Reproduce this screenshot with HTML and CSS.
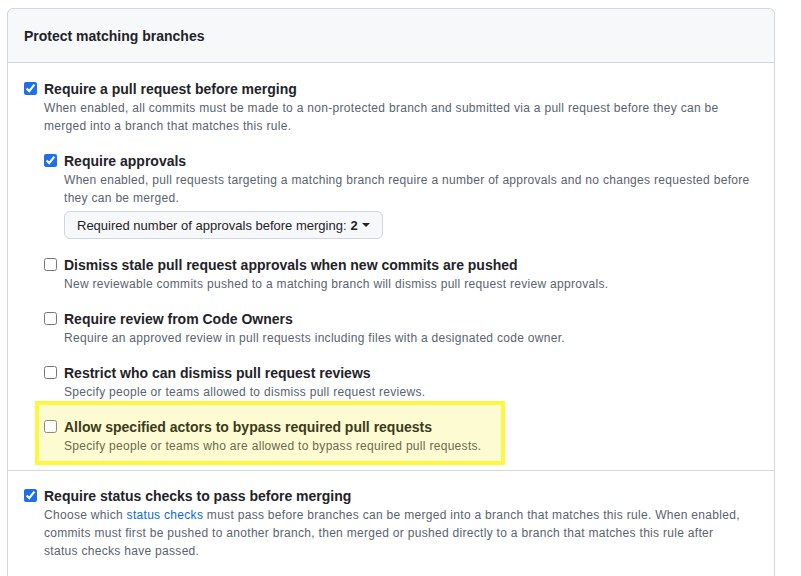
FILE: index.html
```html
<!DOCTYPE html>
<html>
<head>
<meta charset="utf-8">
<link rel="stylesheet" href="styles.css">
</head>
<body>
<div class="box">
  <div class="box-header">Protect matching branches</div>
  <div class="section">
    <div class="option">
      <input type="checkbox" class="cb" checked>
      <div class="option-body">
        <div class="title">Require a pull request before merging</div>
        <p class="desc">When enabled, all commits must be made to a non-protected branch and submitted via a pull request before they can be merged into a branch that matches this rule.</p>
        <div class="suboptions">
          <div class="option">
            <input type="checkbox" class="cb" checked>
            <div class="option-body">
              <div class="title">Require approvals</div>
              <p class="desc">When enabled, pull requests targeting a matching branch require a number of approvals and no changes requested before they can be merged.</p>
              <button class="select-btn">Required number of approvals before merging: <b>2</b><span class="caret"></span></button>
            </div>
          </div>
          <div class="option">
            <input type="checkbox" class="cb">
            <div class="option-body">
              <div class="title">Dismiss stale pull request approvals when new commits are pushed</div>
              <p class="desc">New reviewable commits pushed to a matching branch will dismiss pull request review approvals.</p>
            </div>
          </div>
          <div class="option">
            <input type="checkbox" class="cb">
            <div class="option-body">
              <div class="title">Require review from Code Owners</div>
              <p class="desc">Require an approved review in pull requests including files with a designated code owner.</p>
            </div>
          </div>
          <div class="option">
            <input type="checkbox" class="cb">
            <div class="option-body">
              <div class="title">Restrict who can dismiss pull request reviews</div>
              <p class="desc">Specify people or teams allowed to dismiss pull request reviews.</p>
            </div>
          </div>
          <div class="option highlight">
            <input type="checkbox" class="cb">
            <div class="option-body">
              <div class="title">Allow specified actors to bypass required pull requests</div>
              <p class="desc">Specify people or teams who are allowed to bypass required pull requests.</p>
            </div>
          </div>
        </div>
      </div>
    </div>
  </div>
  <div class="section">
    <div class="option">
      <input type="checkbox" class="cb" checked>
      <div class="option-body">
        <div class="title">Require status checks to pass before merging</div>
        <p class="desc desc-narrow">Choose which <a href="#" class="link">status checks</a> must pass before branches can be merged into a branch that matches this rule. When enabled, commits must first be pushed to another branch, then merged or pushed directly to a branch that matches this rule after status checks have passed.</p>
      </div>
    </div>
  </div>
</div>
</body>
</html>
```
FILE: styles.css
```css
html, body {
  margin: 0;
  padding: 0;
  background: #ffffff;
}
body {
  font-family: "Liberation Sans", Arial, sans-serif;
  color: #1f2328;
  padding: 8px 0 0 7px;
}
.box {
  width: 768px;
  box-sizing: border-box;
  border: 1px solid #d0d7de;
  border-bottom: none;
  border-radius: 6px 6px 0 0;
  height: 600px;
}
.box-header {
  background: #f6f8fa;
  border-bottom: 1px solid #d0d7de;
  border-radius: 6px 6px 0 0;
  height: 54px;
  box-sizing: border-box;
  padding: 0 16px;
  display: flex;
  align-items: center;
  font-size: 14px;
  font-weight: bold;
}
.section {
  padding: 16px 16px 15px 16px;
}
.section + .section {
  border-top: 1px solid #d0d7de;
  padding-top: 15px;
}
.option {
  display: flex;
  align-items: flex-start;
}
.cb {
  width: 13px;
  height: 13px;
  margin: 3px 7px 0 0;
  flex: none;
  accent-color: #1f6feb;
}
.option-body {
  flex: 1;
  min-width: 0;
}
.title {
  font-size: 14px;
  font-weight: bold;
  line-height: 20px;
}
.desc {
  margin: 0;
  font-size: 12px;
  line-height: 18px;
  letter-spacing: 0.3px;
  color: #59636e;
}
.desc-narrow {
  max-width: 704px;
}
.link {
  color: #0969da;
  text-decoration: none;
}
.suboptions {
  display: flex;
  flex-direction: column;
  gap: 16px;
  margin-top: 16px;
}
.select-btn {
  margin-top: 4px;
  height: 28px;
  padding: 0 12px;
  font-family: inherit;
  font-size: 13px;
  color: #1f2328;
  background: #f6f8fa;
  border: 1px solid #d0d7de;
  border-radius: 6px;
  display: inline-flex;
  align-items: center;
}
.select-btn b {
  margin-left: 4px;
  font-weight: bold;
}
.caret {
  display: inline-block;
  width: 0;
  height: 0;
  margin-left: 4px;
  border-left: 4px solid transparent;
  border-right: 4px solid transparent;
  border-top: 4px solid #1f2328;
}
.highlight {
  align-self: flex-start;
  margin: -16px 0 -10px -9px;
  padding: 12px 20px 6px 5px;
  border: 4px solid #fdf73f;
  background: #fdfbd2;
}
.highlight .title {
  color: #3b3a1c;
}
.highlight .desc {
  color: #6b6a4c;
}
.highlight .cb {
  opacity: 0.85;
}
```
